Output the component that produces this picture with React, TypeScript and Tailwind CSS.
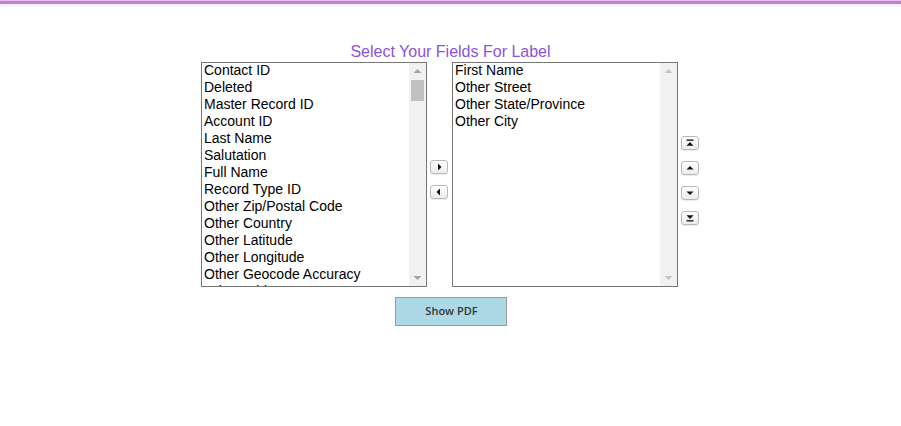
import React from 'react';

const available = [
  'Contact ID',
  'Deleted',
  'Master Record ID',
  'Account ID',
  'Last Name',
  'Salutation',
  'Full Name',
  'Record Type ID',
  'Other Zip/Postal Code',
  'Other Country',
  'Other Latitude',
  'Other Longitude',
  'Other Geocode Accuracy',
  'Other Address',
];

const selected = ['First Name', 'Other Street', 'Other State/Province', 'Other City'];

type Glyph = 'right' | 'left' | 'top' | 'up' | 'down' | 'bottom';

const Arrow = ({ kind }: { kind: Glyph }) => {
  const paths: Record<Glyph, React.ReactNode> = {
    right: <path d="M4 1.5 L7.5 5 L4 8.5 Z" />,
    left: <path d="M6 1.5 L2.5 5 L6 8.5 Z" />,
    up: <path d="M1.5 6.5 L5 3 L8.5 6.5 Z" />,
    down: <path d="M1.5 3.5 L5 7 L8.5 3.5 Z" />,
    top: (
      <>
        <rect x="1.5" y="1.5" width="7" height="1.3" />
        <path d="M1.5 7.8 L5 4 L8.5 7.8 Z" />
      </>
    ),
    bottom: (
      <>
        <path d="M1.5 2.2 L5 6 L8.5 2.2 Z" />
        <rect x="1.5" y="7.2" width="7" height="1.3" />
      </>
    ),
  };
  return (
    <button className="w-[18px] h-[14px] flex items-center justify-center rounded-[3px] border border-[#b9b9b9] bg-gradient-to-b from-white to-[#ececec] shadow-[0_1px_1px_rgba(0,0,0,0.08)]">
      <svg width="10" height="10" viewBox="0 0 10 10" fill="#111">
        {paths[kind]}
      </svg>
    </button>
  );
};

const Scrollbar = ({ active }: { active: boolean }) => {
  const arrow = active ? '#a3a3a3' : '#c4c4c4';
  return (
    <div className="w-[17px] bg-[#f1f1f1] flex flex-col items-center">
      <svg width="17" height="17" viewBox="0 0 17 17" fill={arrow}>
        <path d="M4.5 10 L8.5 6 L12.5 10 Z" />
      </svg>
      {active && <div className="w-[13px] h-[21px] bg-[#c1c1c1]" />}
      <div className="flex-1" />
      <svg width="17" height="17" viewBox="0 0 17 17" fill={arrow}>
        <path d="M4.5 7 L8.5 11 L12.5 7 Z" />
      </svg>
    </div>
  );
};

const ListBox = ({ items, scrollable }: { items: string[]; scrollable: boolean }) => (
  <div className="w-[226px] h-[225px] border border-[#767676] bg-white flex overflow-hidden">
    <ul className="flex-1 overflow-hidden pl-[2px] -mt-[1px] text-[14px] leading-[17px] text-black">
      {items.map((item) => (
        <li key={item} className="whitespace-nowrap">
          {item}
        </li>
      ))}
    </ul>
    <Scrollbar active={scrollable} />
  </div>
);

const App = () => {
  return (
    <div className="min-h-[426px] bg-white" style={{ fontFamily: '"Liberation Sans", Arial, sans-serif' }}>
      <div className="h-[1px] bg-[#e2c4e8]" />
      <div className="h-[3px] bg-[#c77dd6] shadow-[0_2px_3px_rgba(120,120,200,0.18)]" />

      <div className="flex flex-col items-center pt-[39px]">
        <h2 className="text-[16px] leading-[18px] text-[#8d52dc]">Select Your Fields For Label</h2>

        <div className="flex items-start mt-[1px] pr-[1px]">
          <ListBox items={available} scrollable />
          <div className="flex flex-col gap-[11px] mt-[98px] ml-[3px] mr-[4px]">
            <Arrow kind="right" />
            <Arrow kind="left" />
          </div>
          <ListBox items={selected} scrollable={false} />
          <div className="flex flex-col gap-[11px] mt-[74px] ml-[3px]">
            <Arrow kind="top" />
            <Arrow kind="up" />
            <Arrow kind="down" />
            <Arrow kind="bottom" />
          </div>
        </div>

        <button
          className="mt-[10px] w-[112px] h-[29px] bg-[#add8e6] border border-[#9a9a9a] text-[11px] font-semibold text-[#333] pl-[2px]"
          style={{ fontFamily: '"Open Sans", "Liberation Sans", sans-serif' }}
        >
          Show PDF
        </button>
      </div>
    </div>
  );
};

export default App;
